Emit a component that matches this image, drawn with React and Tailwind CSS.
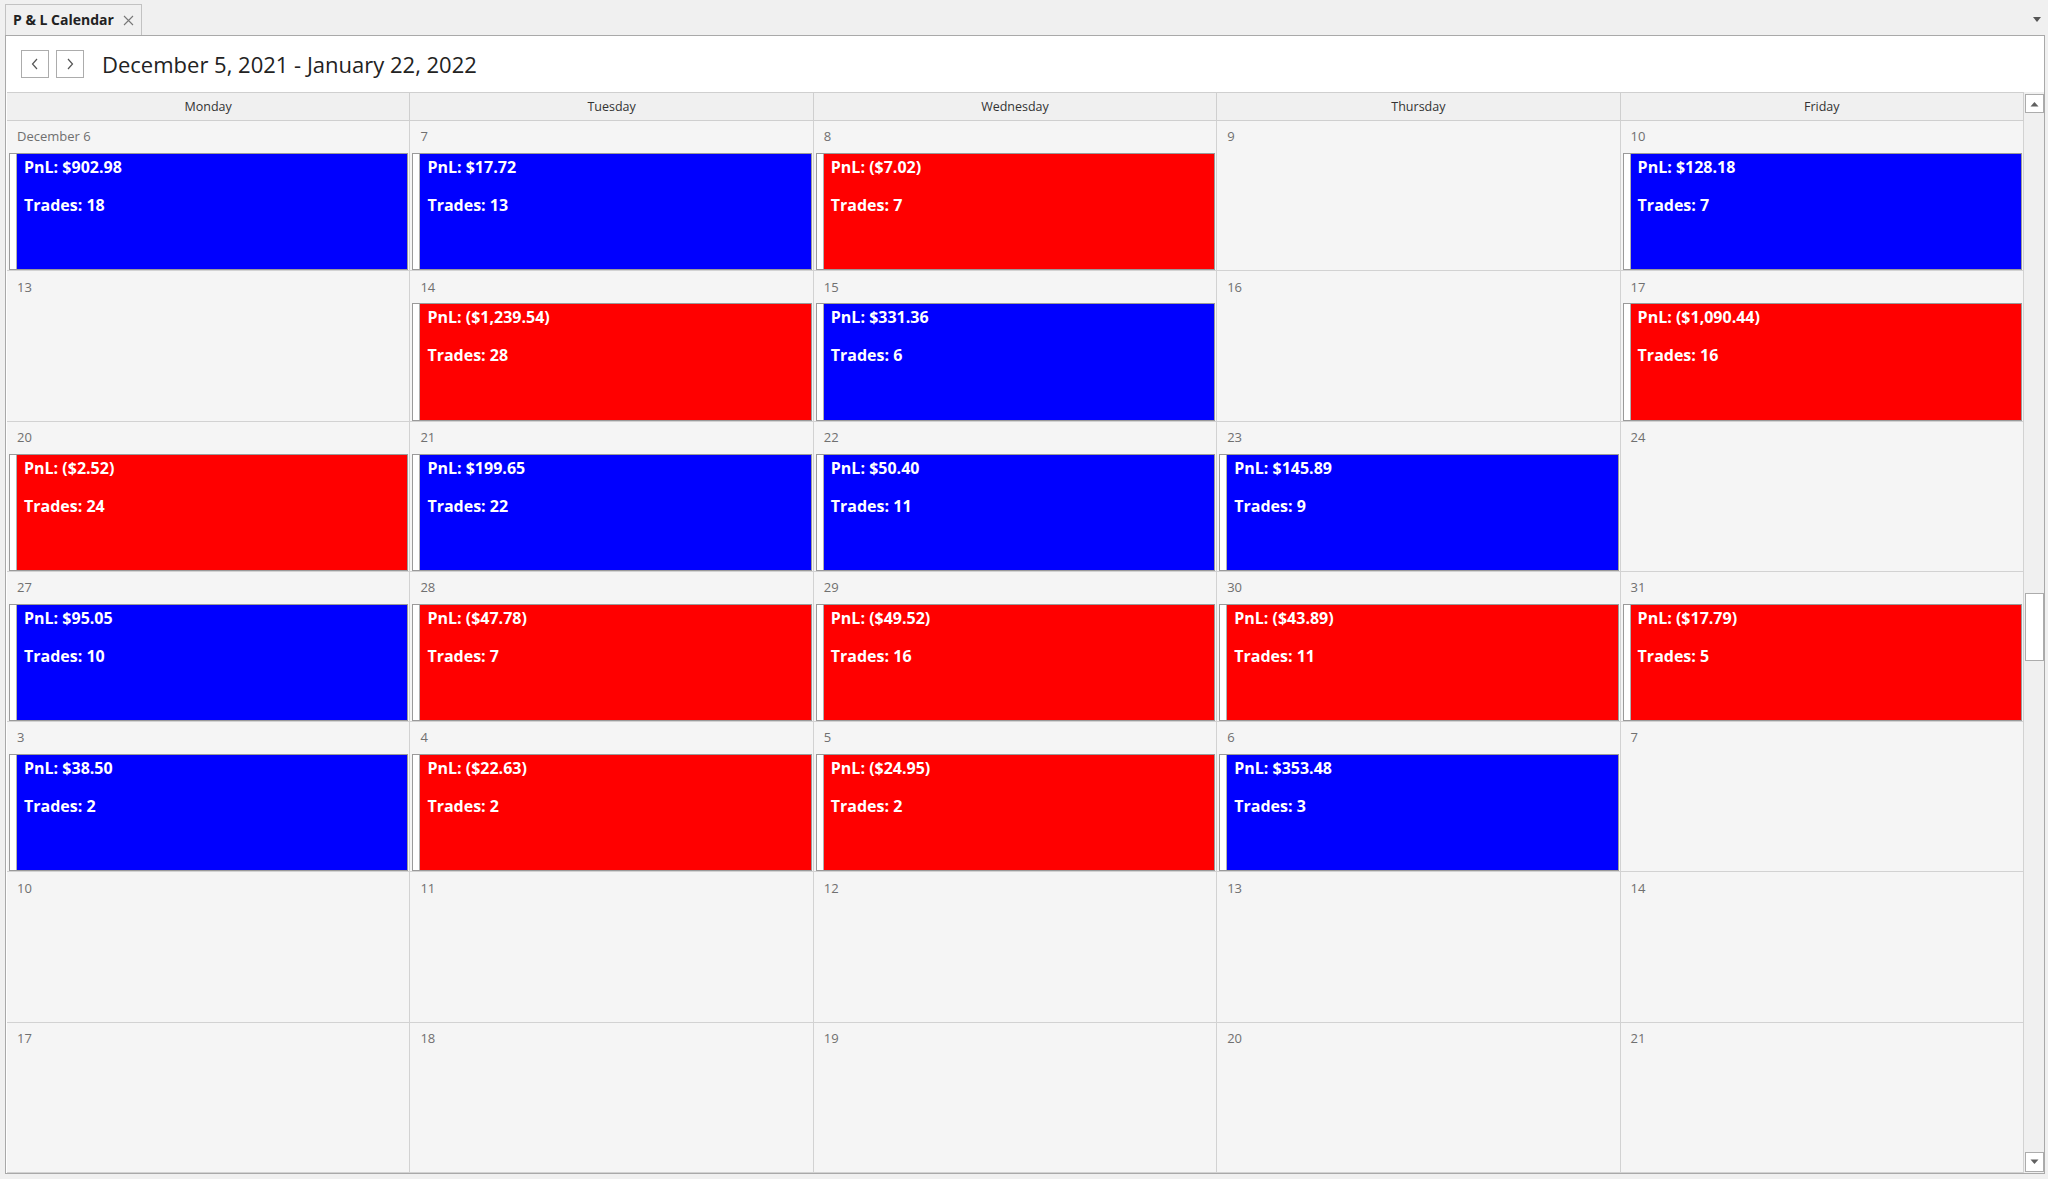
import React from "react";

// weeks shown in the month view, Monday..Friday
const weeks = [
  [
    { day: "December 6", pnl: "$902.98", trades: 18 },
    { day: "7", pnl: "$17.72", trades: 13 },
    { day: "8", pnl: "($7.02)", trades: 7 },
    { day: "9" },
    { day: "10", pnl: "$128.18", trades: 7 },
  ],
  [
    { day: "13" },
    { day: "14", pnl: "($1,239.54)", trades: 28 },
    { day: "15", pnl: "$331.36", trades: 6 },
    { day: "16" },
    { day: "17", pnl: "($1,090.44)", trades: 16 },
  ],
  [
    { day: "20", pnl: "($2.52)", trades: 24 },
    { day: "21", pnl: "$199.65", trades: 22 },
    { day: "22", pnl: "$50.40", trades: 11 },
    { day: "23", pnl: "$145.89", trades: 9 },
    { day: "24" },
  ],
  [
    { day: "27", pnl: "$95.05", trades: 10 },
    { day: "28", pnl: "($47.78)", trades: 7 },
    { day: "29", pnl: "($49.52)", trades: 16 },
    { day: "30", pnl: "($43.89)", trades: 11 },
    { day: "31", pnl: "($17.79)", trades: 5 },
  ],
  [
    { day: "3", pnl: "$38.50", trades: 2 },
    { day: "4", pnl: "($22.63)", trades: 2 },
    { day: "5", pnl: "($24.95)", trades: 2 },
    { day: "6", pnl: "$353.48", trades: 3 },
    { day: "7" },
  ],
  [{ day: "10" }, { day: "11" }, { day: "12" }, { day: "13" }, { day: "14" }],
  [{ day: "17" }, { day: "18" }, { day: "19" }, { day: "20" }, { day: "21" }],
];

const days = ["Monday", "Tuesday", "Wednesday", "Thursday", "Friday"];

function Chevron({ dir }) {
  return (
    <svg width="10" height="14" viewBox="0 0 10 14" fill="none">
      <path
        d={dir === "left" ? "M7 2L2.5 7L7 12" : "M3 2L7.5 7L3 12"}
        stroke="#555"
        strokeWidth="1.2"
      />
    </svg>
  );
}

function Triangle({ up }) {
  return (
    <svg width="9" height="6" viewBox="0 0 9 6">
      <path d={up ? "M0.5 5.5L4.5 1L8.5 5.5Z" : "M0.5 0.5L4.5 5L8.5 0.5Z"} fill="#606060" />
    </svg>
  );
}

function Appointment({ pnl, trades }) {
  const loss = pnl.startsWith("(");
  return (
    <div className="flex-1 ml-[2px] mr-[1px] flex border border-[#9a9a9a] min-h-0">
      <div className="w-[7px] bg-white border-r border-[#b0b0b0]" />
      <div
        className={`flex-1 pl-[7px] pt-[3px] text-white font-bold text-[16px] leading-[20px] ${
          loss ? "bg-[#ff0000]" : "bg-[#0000ff]"
        }`}
      >
        <div>PnL: {pnl}</div>
        <div className="mt-[18px]">Trades: {trades}</div>
      </div>
    </div>
  );
}

export default function App() {
  return (
    <div
      className="w-[2048px] h-[1179px] bg-[#f0f0f0] overflow-hidden"
      style={{ fontFamily: '"Open Sans", "Noto Sans", sans-serif' }}
    >
      {/* tab strip */}
      <div className="h-[35px] flex items-end pl-[5px] pr-[7px] relative">
        <div className="h-[31px] w-[137px] border border-b-0 border-[#c2c2c2] bg-[#f0f0f0] flex items-center pl-[7px] gap-[9px]">
          <span className="font-bold text-[14px] text-[#222] leading-none">P &amp; L Calendar</span>
          <svg width="11" height="11" viewBox="0 0 11 11">
            <path d="M1 1L10 10M10 1L1 10" stroke="#777" strokeWidth="1.1" />
          </svg>
        </div>
        <div className="ml-auto self-start mt-[17px]">
          <svg width="8" height="5" viewBox="0 0 8 5">
            <path d="M0 0H8L4 5Z" fill="#555" />
          </svg>
        </div>
      </div>

      {/* main frame */}
      <div className="ml-[5px] w-[2040px] h-[1139px] border border-[#a9a9a9] flex flex-col bg-white">
        {/* toolbar */}
        <div className="h-[56px] flex items-center pl-[15px] bg-white">
          <button className="w-[28px] h-[28px] border border-[#acacac] bg-white flex items-center justify-center">
            <Chevron dir="left" />
          </button>
          <button className="w-[28px] h-[28px] border border-[#acacac] bg-white flex items-center justify-center ml-[7px]">
            <Chevron dir="right" />
          </button>
          <div className="ml-[18px] text-[22px] text-[#222] leading-none pb-[1px]">
            December 5, 2021 - January 22, 2022
          </div>
        </div>

        {/* calendar + scrollbar */}
        <div className="flex-1 flex min-h-0">
          <div className="flex-1 flex flex-col min-w-0 pl-[1px]">
            <div className="h-[29px] grid grid-cols-5 bg-[#f0f0f0] border-t border-b border-[#cfcfcf]">
              {days.map((d) => (
                <div
                  key={d}
                  className="border-r border-[#cfcfcf] flex items-center justify-center pt-[2px] text-[12.5px] text-[#333]"
                >
                  {d}
                </div>
              ))}
            </div>
            <div className="flex-1 grid grid-rows-7 min-h-0">
              {weeks.map((week, wi) => (
                <div key={wi} className="grid grid-cols-5 min-h-0">
                  {week.map((cell, ci) => (
                    <div
                      key={ci}
                      className="bg-[#f5f5f5] border-r border-b border-[#d2d2d2] flex flex-col min-h-0"
                    >
                      <div className="h-[32px] shrink-0 flex items-center pl-[10px] text-[13px] text-[#707070]">
                        {cell.day}
                      </div>
                      {cell.pnl && <Appointment pnl={cell.pnl} trades={cell.trades} />}
                    </div>
                  ))}
                </div>
              ))}
            </div>
          </div>

          {/* vertical scrollbar */}
          <div className="w-[20px] bg-[#f0f0f0] flex flex-col items-center">
            <div className="mt-[2px] w-[19px] h-[19px] border border-[#acacac] bg-white flex items-center justify-center">
              <Triangle up />
            </div>
            <div className="mt-[480px] w-[19px] h-[68px] border border-[#acacac] bg-white" />
            <div className="flex-1" />
            <div className="mb-[1px] w-[19px] h-[20px] border border-[#acacac] bg-white flex items-center justify-center">
              <Triangle />
            </div>
          </div>
        </div>
      </div>
    </div>
  );
}
